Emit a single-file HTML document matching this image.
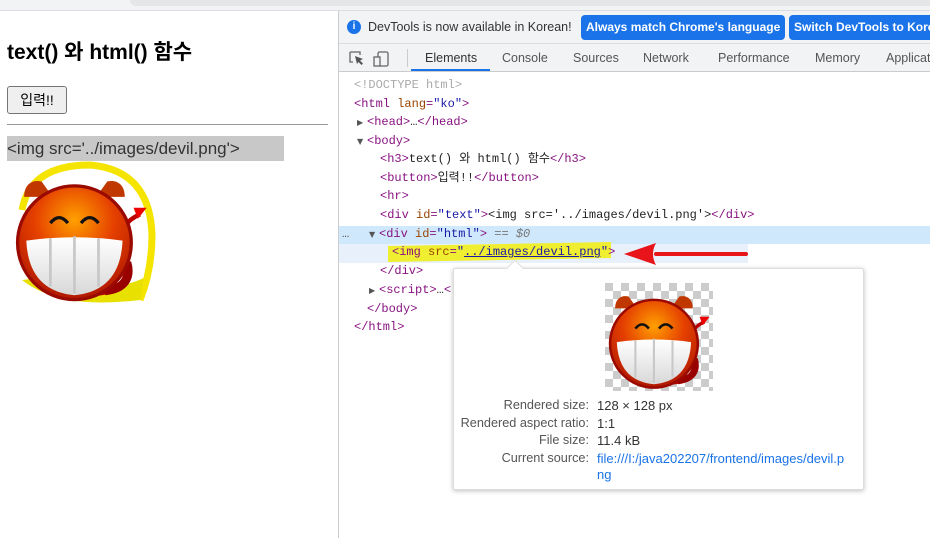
<!DOCTYPE html>
<html><head><meta charset="utf-8">
<style>
*{margin:0;padding:0;box-sizing:border-box}
body{width:930px;height:538px;overflow:hidden;background:#fff;position:relative;font-family:"Liberation Sans","Noto Sans CJK KR",sans-serif}
.a{position:absolute;white-space:nowrap}
.m{font-family:"Liberation Mono","Noto Sans CJK KR",monospace;font-size:12px;line-height:14px;height:14px;color:#881280}
.at{color:#994500}.av{color:#1a1aa6}.tx{color:#222}
.tri{color:#555;font-size:8px;display:inline-block;width:10px;font-family:"DejaVu Sans",sans-serif}
.lab{position:absolute;right:341px;font-size:12.7px;color:#555;font-family:"Liberation Sans",sans-serif}
.val{position:absolute;left:597px;font-size:13px;color:#333}
</style></head><body>
<svg width="0" height="0" style="position:absolute">
<defs>
<radialGradient id="g1" cx="0.5" cy="0.3" r="0.7"><stop offset="0" stop-color="#ffa000"/><stop offset="0.5" stop-color="#e54000"/><stop offset="1" stop-color="#b01800"/></radialGradient>
<linearGradient id="g2" x1="0" x2="0" y1="0" y2="1"><stop offset="0" stop-color="#fff"/><stop offset="1" stop-color="#d8d8d8"/></linearGradient>
<symbol id="dv" viewBox="0 0 128 128">
<path d="M70 118 C100 122 112 100 104 80 C98 62 104 52 118 46" stroke="#b00" stroke-width="4" fill="none"/>
<path d="M86 116 C104 114 110 104 106 90" stroke="#900" stroke-width="8" fill="none"/>
<path d="M112 40 L124 40 L116 50Z" fill="#e00"/>
<path d="M12 30 C12 18 20 14 28 16 L38 30Z" fill="#c03800"/>
<path d="M104 30 C104 18 96 14 88 16 L78 30Z" fill="#c03800"/>
<circle cx="58" cy="72" r="52" fill="url(#g1)" stroke="#9a0a00" stroke-width="3"/>
<path d="M14 70 Q58 64 102 70 Q100 116 58 120 Q16 116 14 70Z" fill="url(#g2)"/>
<path d="M36 68V112M58 66V118M80 68V112" stroke="#c8c8c8" stroke-width="2.5"/>
<path d="M36 54 Q44 44 52 54M64 54 Q72 44 80 54" stroke="#111" stroke-width="3" fill="none"/>
</symbol>
<pattern id="ck" width="16" height="16" patternUnits="userSpaceOnUse"><rect width="16" height="16" fill="#fff"/><rect width="8" height="8" fill="#ccc"/><rect x="8" y="8" width="8" height="8" fill="#ccc"/></pattern>
</defs></svg>

<div class="a" style="left:0;top:0;width:930px;height:10px;background:#f1f3f4"></div>
<div class="a" style="left:130px;top:0;width:800px;height:6px;background:#e4e6e8;border-radius:0 0 0 10px"></div>
<div class="a" style="left:0;top:10px;width:930px;height:1px;background:#dadce0"></div>

<!-- left page -->
<div class="a" style="left:7px;top:36px;font-size:21px;font-weight:bold;color:#000">text() 와 html() 함수</div>
<div class="a" style="left:7px;top:86px;width:60px;height:28px;border:1px solid #767676;border-radius:3px;background:#efefef;font-size:14px;text-align:center;line-height:26px">입력!!</div>
<div class="a" style="left:7px;top:124px;width:321px;height:1px;background:#999"></div>
<div class="a" style="left:7px;top:136px;width:277px;height:25px;background:#c8c8c8;font-size:17px;color:#333;line-height:25px">&lt;img src='../images/devil.png'&gt;</div>
<svg class="a" style="left:0;top:160px" width="170" height="145" viewBox="0 0 170 145">
<path d="M22 50 Q30 5 90 5 Q150 10 152 75 Q152 110 140 140" fill="none" stroke="#f5e400" stroke-width="7"/>
<path d="M22 120 Q60 150 140 140 L144 118 Q100 138 40 118Z" fill="#e8e000"/>
<use href="#dv" x="6" y="4" width="150" height="140"/>
</svg>
<div class="a" style="left:338px;top:11px;width:1px;height:527px;background:#ccc"></div>

<!-- devtools info bar -->
<div class="a" style="left:339px;top:11px;width:591px;height:33px;background:#f1f3f4;border-bottom:1px solid #ddd"></div>
<div class="a" style="left:347px;top:20px;width:14px;height:14px;border-radius:50%;background:#1a73e8;color:#fff;font-size:10px;font-weight:bold;text-align:center;line-height:14px">i</div>
<div class="a" style="left:368px;top:20px;font-size:12.5px;color:#333">DevTools is now available in Korean!</div>
<div class="a" style="left:581px;top:15px;width:204px;height:25px;background:#1a73e8;border-radius:4px;color:#fff;font-size:12px;font-weight:bold;line-height:25px;padding-left:5px;overflow:hidden">Always match Chrome's language</div>
<div class="a" style="left:789px;top:15px;width:160px;height:25px;background:#1a73e8;border-radius:4px;color:#fff;font-size:12px;font-weight:bold;line-height:25px;padding-left:5px">Switch DevTools to Korean</div>

<!-- tabs -->
<div class="a" style="left:339px;top:44px;width:591px;height:28px;background:#f1f3f4;border-bottom:1px solid #ccc"></div>
<svg class="a" style="left:348px;top:50px" width="50" height="18"><path d="M2 2h10v3M2 2v10h3" stroke="#666" fill="none" stroke-width="1.3"/><path d="M7 6l8 3-3 1.5 3 3-1.5 1.5-3-3L9 14Z" fill="#555"/><rect x="30" y="2" width="10" height="14" rx="1.5" stroke="#666" fill="none" stroke-width="1.3"/><rect x="26" y="7" width="6" height="9" fill="#f1f3f4" stroke="#666" stroke-width="1.3"/></svg>
<div class="a" style="left:407px;top:49px;width:1px;height:18px;background:#ccc"></div>
<div class="a" style="left:425px;top:51px;font-size:12.5px;color:#333">Elements</div>
<div class="a" style="left:411px;top:69px;width:79px;height:2px;background:#1a73e8"></div>
<div class="a" style="left:502px;top:51px;font-size:12.5px;color:#555">Console</div>
<div class="a" style="left:573px;top:51px;font-size:12.5px;color:#555">Sources</div>
<div class="a" style="left:643px;top:51px;font-size:12.5px;color:#555">Network</div>
<div class="a" style="left:718px;top:51px;font-size:12.5px;color:#555">Performance</div>
<div class="a" style="left:815px;top:51px;font-size:12.5px;color:#555">Memory</div>
<div class="a" style="left:886px;top:51px;font-size:12.5px;color:#555">Application</div>

<!-- elements tree -->
<div class="a" style="left:339px;top:226px;width:591px;height:18px;background:#cfe8fc"></div>
<div class="a" style="left:339px;top:244px;width:409px;height:19px;background:#e8f1fb"></div>
<div class="a" style="left:388px;top:244px;width:223px;height:16px;background:#f0ee30;transform:skewY(-1deg)"></div>
<div class="a m" style="left:354px;top:78px;color:#aaa">&lt;!DOCTYPE html&gt;</div>
<div class="a m" style="left:354px;top:97px">&lt;html <span class="at">lang</span>=<span class="av">"ko"</span>&gt;</div>
<div class="a m" style="left:357px;top:115px"><span class="tri">▶</span>&lt;head&gt;<span class="tx">…</span>&lt;/head&gt;</div>
<div class="a m" style="left:357px;top:134px"><span class="tri">▼</span>&lt;body&gt;</div>
<div class="a m" style="left:380px;top:152px">&lt;h3&gt;<span class="tx">text() 와 html() 함수</span>&lt;/h3&gt;</div>
<div class="a m" style="left:380px;top:171px">&lt;button&gt;<span class="tx">입력!!</span>&lt;/button&gt;</div>
<div class="a m" style="left:380px;top:189px">&lt;hr&gt;</div>
<div class="a m" style="left:380px;top:208px">&lt;div <span class="at">id</span>=<span class="av">"text"</span>&gt;<span class="tx">&lt;img src='../images/devil.png'&gt;</span>&lt;/div&gt;</div>
<div class="a m" style="left:342px;top:227px;color:#555">… <span style="display:inline-block;width:18px"></span></div>
<div class="a m" style="left:369px;top:227px"><span class="tri">▼</span>&lt;div <span class="at">id</span>=<span class="av">"html"</span>&gt; <span style="color:#777">== <i>$0</i></span></div>
<div class="a m" style="left:392px;top:245px">&lt;img <span class="at">src</span>=<span class="av">"<u>../images/devil.png</u>"</span>&gt;</div>
<div class="a m" style="left:380px;top:264px">&lt;/div&gt;</div>
<div class="a m" style="left:369px;top:283px"><span class="tri">▶</span>&lt;script&gt;<span class="tx">…</span>&lt;</div>
<div class="a m" style="left:367px;top:302px">&lt;/body&gt;</div>
<div class="a m" style="left:354px;top:320px">&lt;/html&gt;</div>
<svg class="a" style="left:622px;top:240px" width="128" height="28"><path d="M34 14H124" stroke="#e8141a" stroke-width="4" stroke-linecap="round"/><path d="M2 14L34 3Q28 14 34 25Z" fill="#e8141a"/></svg>

<!-- tooltip -->
<div class="a" style="left:453px;top:268px;width:411px;height:222px;background:#fff;border:1px solid #ddd;box-shadow:0 1px 5px rgba(0,0,0,.25);border-radius:2px"></div>
<div class="a" style="left:509px;top:262px;width:12px;height:12px;background:#fff;border-left:1px solid #ddd;border-top:1px solid #ddd;transform:rotate(45deg)"></div>
<svg class="a" style="left:605px;top:283px" width="108" height="108"><rect width="108" height="108" fill="url(#ck)"/><use href="#dv" x="0" y="0" width="108" height="108"/></svg>
<div class="lab" style="top:398px">Rendered size:</div><div class="val" style="top:398px">128 × 128 px</div>
<div class="lab" style="top:416px">Rendered aspect ratio:</div><div class="val" style="top:416px">1:1</div>
<div class="lab" style="top:433px">File size:</div><div class="val" style="top:433px">11.4 kB</div>
<div class="lab" style="top:451px">Current source:</div>
<div class="val" style="top:451px;color:#1a73e8;line-height:16px">file:///I:/java202207/frontend/images/devil.p<br>ng</div>
</body></html>
